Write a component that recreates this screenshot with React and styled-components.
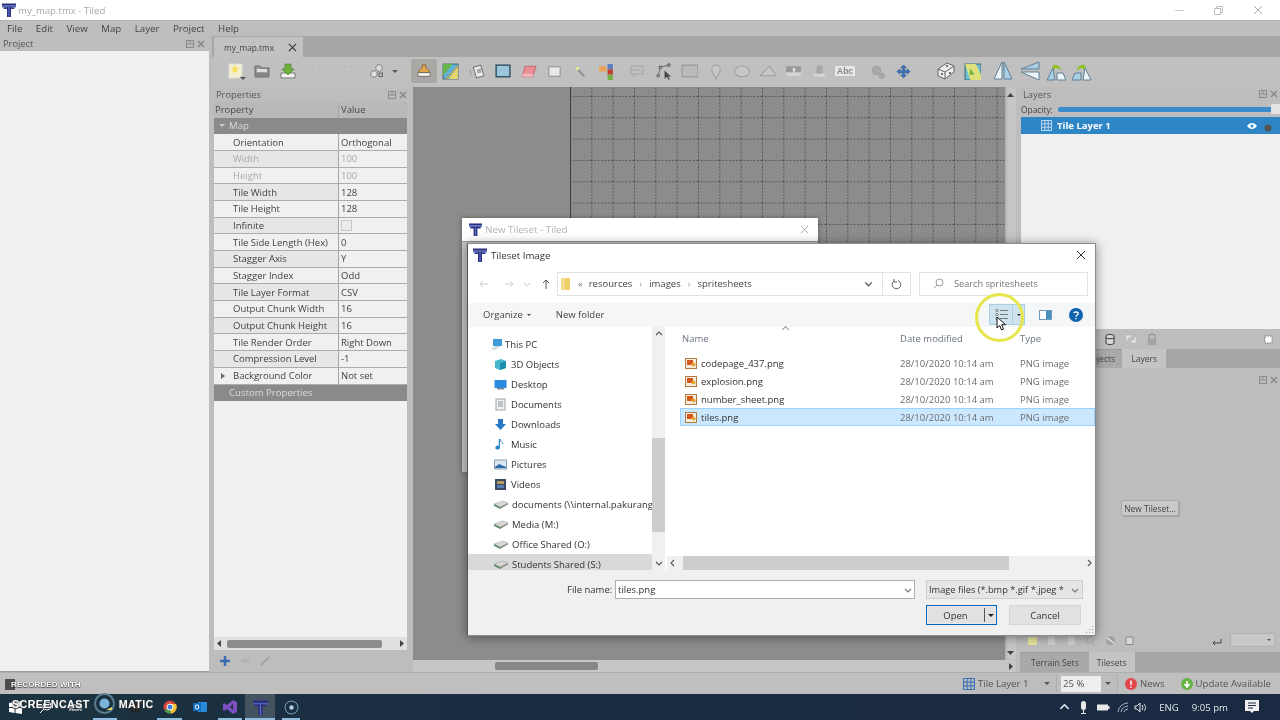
import React from 'react'
import styled, { createGlobalStyle } from 'styled-components'

const Global = createGlobalStyle`
  html, body { margin: 0; padding: 0; background: #bdbdbd; overflow: hidden; }
  * { box-sizing: border-box; }
`

const Page = styled.div`
  position: relative;
  width: 1280px;
  height: 720px;
  display: flex;
  flex-direction: column;
  overflow: hidden;
  background: #bdbdbd;
  font-family: "Open Sans", "Liberation Sans", sans-serif;
  font-size: 9.5px;
  color: #3a3a3a;
  filter: blur(0.3px);
`

/* main window chrome */
const TitleBar = styled.div`
  height: 20px;
  background: #fff;
  display: flex;
  align-items: center;
  padding: 0 0 0 2px;
  color: #a8a8a8;
  font-size: 9.6px;
`
const TitleText = styled.span`
  margin-left: 2px;
  flex: 1;
`
const WinButtons = styled.div`
  display: flex;
  align-items: center;
  gap: 30px;
  padding-right: 17px;
`
const MenuBar = styled.div`
  height: 16px;
  background: #bebebe;
  border-top: 1px solid #b0b0b0;
  display: flex;
  align-items: center;
  padding: 0 0 1px 7px;
  gap: 13.5px;
  font-size: 9.7px;
  color: #444;
`
const Workspace = styled.div`
  height: 636px;
  display: flex;
  background: #bdbdbd;
`
const ProjectDock = styled.div`
  width: 209px;
  display: flex;
  flex-direction: column;
  margin-right: 3px;
`
const DockHeader = styled.div`
  height: ${p => p.$h || 15}px;
  display: flex;
  align-items: center;
  justify-content: space-between;
  padding: 0 ${p => p.$pr || 2}px 0 ${p => p.$pl || 2}px;
  font-size: 9.3px;
  color: #555;
  flex: none;
`
const DockButtons = styled.div`
  display: flex;
  gap: 3px;
  align-items: center;
`
const WhitePanel = styled.div`
  flex: 1;
  background: #f0f0f0;
  border-bottom: 1px solid #9c9c9c;
`
const EditorColumn = styled.div`
  flex: 1;
  display: flex;
  flex-direction: column;
  min-width: 0;
`
const TabStrip = styled.div`
  height: 21px;
  background: #a6a6a6;
  display: flex;
  align-items: flex-end;
  padding-left: 2px;
  flex: none;
`
const MapTab = styled.div`
  width: 89px;
  height: 20px;
  background: #c2c2c2;
  display: flex;
  align-items: center;
  justify-content: space-between;
  padding: 0 6px 0 10px;
  font-size: 8.3px;
  color: #444;
`
const Toolbar = styled.div`
  height: 30px;
  background: #c0c0c0;
  display: flex;
  align-items: center;
  padding: 0 0 2px 12px;
  flex: none;
`
const Tool = styled.div`
  width: ${p => p.$w || 26}px;
  margin-left: ${p => p.$gap || 0}px;
  height: 24px;
  flex: none;
  display: flex;
  align-items: center;
  justify-content: center;
  background: ${p => (p.$active ? '#aaa8a4' : 'transparent')};
  border-radius: 2px;
`
const EditorBody = styled.div`
  flex: 1;
  display: flex;
  min-height: 0;
`

/* properties */
const PropertiesDock = styled.div`
  width: 196px;
  margin-right: 5px;
  display: flex;
  flex-direction: column;
  flex: none;
`
const PropHead = styled.div`
  height: 15.5px;
  margin-left: 2px;
  margin-right: 1px;
  display: grid;
  grid-template-columns: 124px 1fr;
  background: #b9b9b9;
  align-items: center;
  font-size: 9.5px;
  color: #4a4a4a;
`
const PropCell = styled.span`
  padding-left: ${p => p.$pl || 1}px;
  border-left: ${p => (p.$sep ? '1px solid #a5a5a5' : 'none')};
  height: 100%;
  display: flex;
  align-items: center;
`
const PropTable = styled.div`
  margin-left: 2px;
  margin-right: 1px;
  flex: 1;
  background: #f1f1f1;
  display: flex;
  flex-direction: column;
`
const GroupRow = styled.div`
  height: 16.7px;
  background: #8a8a8a;
  color: #dcdcdc;
  display: flex;
  align-items: center;
  padding-left: ${p => p.$pl || 5}px;
  gap: 4px;
  font-size: 9.6px;
  flex: none;
`
const PropRow = styled.div`
  height: 16.7px;
  flex: none;
  display: grid;
  grid-template-columns: 124px 1fr;
  border-bottom: 1px solid #ababab;
  background: ${p => (p.$alt ? '#e6e6e6' : '#f0f0f0')};
  color: ${p => (p.$off ? '#aaa' : '#3f3f3f')};
  font-size: 9.5px;
  position: relative;
`
const PropName = styled.span`
  padding-left: 19px;
  display: flex;
  align-items: center;
  white-space: nowrap;
`
const PropValue = styled.span`
  padding-left: 2px;
  border-left: 1px solid #a5a5a5;
  display: flex;
  align-items: center;
  background: #f0f0f0;
`
const RowCaret = styled.i`
  position: absolute;
  left: 7px;
  top: 5px;
  border-left: 4px solid #666;
  border-top: 3px solid transparent;
  border-bottom: 3px solid transparent;
`
const CheckBox = styled.i`
  width: 11px;
  height: 11px;
  border: 1px solid #c6c6c6;
  background: #ececec;
`
const HScroll = styled.div`
  height: ${p => p.$h || 12}px;
  flex: none;
  display: flex;
  align-items: center;
  justify-content: space-between;
  background: ${p => p.$bg || '#d2d2d2'};
  padding: 0 2px;
  position: relative;
`
const Thumb = styled.i`
  height: ${p => p.$h || 8}px;
  width: ${p => p.$w}px;
  margin-left: ${p => p.$ml || 0}px;
  margin-right: auto;
  background: ${p => p.$c || '#8c8c8c'};
  border-radius: ${p => (p.$h ? 0 : 2)}px;
`
const PropsFoot = styled.div`
  height: 22px;
  display: flex;
  align-items: center;
  padding-left: 8px;
  gap: 10px;
  flex: none;
`

/* map area */
const MapColumn = styled.div`
  width: 603px;
  margin-right: 4px;
  display: flex;
  flex-direction: column;
  flex: none;
`
const MapRow = styled.div`
  flex: 1;
  display: flex;
  min-height: 0;
`
const MapView = styled.div`
  width: 592px;
  background: #8c8c8c;
  padding-left: 157px;
`
const VScroll = styled.div`
  flex: 1;
  background: #c6c6c6;
  display: flex;
  flex-direction: column;
  justify-content: space-between;
  align-items: center;
  padding: 4px 0;
  box-shadow: inset 2px 0 3px -1px rgba(0, 0, 0, 0.15);
`

/* right docks */
const RightDock = styled.div`
  flex: 1;
  display: flex;
  flex-direction: column;
  min-width: 0;
`
const OpacityRow = styled.div`
  height: 16px;
  display: flex;
  align-items: center;
  gap: 5px;
  padding-left: 1px;
  font-size: 8.4px;
  flex: none;
  color: #444;
`
const Slider = styled.div`
  flex: 1;
  height: 5px;
  margin-right: 1px;
  background: #3a8dcb;
  border-radius: 2px;
  position: relative;
`
const SliderKnob = styled.i`
  position: absolute;
  right: -1px;
  top: -3px;
  width: 9px;
  height: 10px;
  background: #e4e4e4;
  border-radius: 1px;
`
const LayerPanel = styled.div`
  height: 212px;
  flex: none;
  background: #f0f0f0;
  margin-left: 1px;
`
const LayerRow = styled.div`
  height: 17px;
  background: #2f86c6;
  display: flex;
  align-items: center;
  padding: 0 5px 0 20px;
  gap: 5px;
  font-size: 9.5px;
  font-weight: 700;
  color: #fff;
`
const LayerName = styled.span`
  flex: 1;
`
const MiniTools = styled.div`
  height: 20px;
  display: flex;
  align-items: center;
  gap: 9px;
  padding: 0 6px 0 84px;
  flex: none;
`
const DockTabs = styled.div`
  height: ${p => p.$h || 19}px;
  background: #a6a6a6;
  display: flex;
  align-items: stretch;
  padding-left: ${p => p.$pl || 0}px;
  font-size: 8.6px;
  flex: none;
`
const DockTab = styled.div`
  padding: 0 ${p => p.$px || 7}px;
  display: flex;
  align-items: center;
  background: ${p => (p.$on ? '#c4c4c4' : '#a9a9a9')};
  border-top: 1px solid ${p => (p.$on ? '#c4c4c4' : '#9c9c9c')};
  color: #474747;
`
const TilesetBody = styled.div`
  flex: 1;
  display: flex;
  flex-direction: column;
`
const TilesetCenter = styled.div`
  flex: 1;
  display: flex;
  align-items: flex-end;
  padding: 0 0 116px 101px;
`
const PlainButton = styled.div`
  width: 58px;
  height: 16px;
  background: #c9c9c9;
  border: 1px solid #aaa;
  border-radius: 2px;
  box-shadow: 1px 1px 1px rgba(0, 0, 0, 0.15);
  font-size: 8.4px;
  display: flex;
  align-items: center;
  justify-content: center;
  white-space: nowrap;
  color: #444;
`
const TilesetTools = styled.div`
  height: 20px;
  display: flex;
  align-items: center;
  padding: 0 5px 4px 6px;
  gap: 6.4px;
  flex: none;
`
const ToolSpacer = styled.span`
  flex: 1;
`
const MiniCombo = styled.div`
  width: 45px;
  height: 14px;
  background: #c8c8c8;
  border: 1px solid #b0b0b0;
  display: flex;
  align-items: center;
  justify-content: flex-end;
  padding-right: 3px;
`
const Caret = styled.i`
  display: inline-block;
  border-top: ${p => p.$s || 3}px solid ${p => p.$c || '#555'};
  border-left: ${p => p.$s || 3}px solid transparent;
  border-right: ${p => p.$s || 3}px solid transparent;
`

/* status + taskbar */
const StatusBar = styled.div`
  height: 22px;
  background: #bfbfbf;
  border-top: 1px solid #adadad;
  display: flex;
  align-items: center;
  justify-content: flex-end;
  font-size: 9.6px;
  color: #555;
  padding-right: 9px;
`
const StatusCombo = styled.div`
  width: ${p => p.$w}px;
  height: 19px;
  display: flex;
  align-items: center;
  justify-content: space-between;
  padding: 0 6px 0 ${p => p.$pl || 3}px;
  margin-right: 3px;
  background: ${p => p.$bg || '#bdbdbd'};
  border-right: 1px solid #aeaeae;
`
const StatusLabel = styled.span`
  display: flex;
  align-items: center;
  gap: 3px;
  margin-left: ${p => p.$ml || 0}px;
`
const ZoomValue = styled.span`
  background: #eee;
  height: 16px;
  width: 40px;
  display: flex;
  align-items: center;
  padding-left: 2px;
`
const Taskbar = styled.div`
  height: 26px;
  background: linear-gradient(90deg, #1b3340, #1a2c42 40%, #1a2a42);
  display: flex;
  align-items: center;
  color: #e4e8ee;
  font-size: 9.6px;
  position: relative;
`
const TaskSlot = styled.div`
  width: ${p => p.$w || 30}px;
  height: 26px;
  margin-left: ${p => p.$gap || 0}px;
  display: flex;
  align-items: center;
  justify-content: center;
  background: ${p => (p.$active ? '#44535f' : 'transparent')};
  position: relative;
  flex: none;
  &::after {
    content: '';
    display: ${p => (p.$open ? 'block' : 'none')};
    position: absolute;
    left: ${p => (p.$active ? 0 : 3)}px;
    right: ${p => (p.$active ? 0 : 3)}px;
    bottom: 0;
    height: 2px;
    background: #8fbde0;
  }
`
const Tray = styled.div`
  margin-left: auto;
  display: flex;
  align-items: center;
  gap: 7px;
  padding-right: 21px;
`
const TrayItem = styled.span`
  margin-left: ${p => p.$ml || 0}px;
`

/* watermark */
const Watermark = styled.div`
  position: absolute;
  left: 11px;
  top: 679px;
  color: #fff;
  font-family: "Liberation Sans", sans-serif;
  font-weight: 700;
  text-shadow: 0 0 1px #333, 0 1px 1px #444;
`
const WmBadge = styled.i`
  position: absolute;
  left: -6px;
  top: 0;
  width: 10px;
  height: 11px;
  background: #4c4c4c;
`
const WmSmall = styled.div`
  font-size: 8px;
  letter-spacing: 0.1px;
  line-height: 12px;
  position: relative;
`
const WmLabel = styled.span`
  position: relative;
`
const WmBig = styled.div`
  display: flex;
  align-items: center;
  font-size: 10.7px;
  letter-spacing: 0.4px;
  line-height: 20px;
  margin: 2px 0 0 1px;
  gap: 4px;
`

/* dialogs */
const BackDialog = styled.div`
  position: absolute;
  left: 462px;
  top: 218px;
  width: 356px;
  height: 254px;
  background: #c6c6c6;
  box-shadow: 0 0 5px rgba(0, 0, 0, 0.35);
`
const BackTitle = styled.div`
  height: 24px;
  background: #fff;
  display: flex;
  align-items: center;
  justify-content: space-between;
  padding: 0 9px 0 7px;
  color: #b4b4b4;
  font-size: 9.8px;
  border-bottom: 1px solid #999;
`
const BackLabel = styled.span`
  display: flex;
  align-items: center;
  gap: 3px;
`
const Dialog = styled.div`
  position: absolute;
  left: 467px;
  top: 243px;
  width: 629px;
  height: 393px;
  background: #fff;
  border: 1px solid #8c8c8c;
  border-left: 1px solid #555;
  box-shadow: 0 1px 10px rgba(0, 0, 0, 0.45);
  display: flex;
  flex-direction: column;
  color: #333;
  font-size: 9.5px;
`
const DialogTitle = styled.div`
  height: 22px;
  display: flex;
  align-items: center;
  justify-content: space-between;
  padding: 0 9px 0 5px;
  font-size: 9.7px;
  flex: none;
`
const DialogLabel = styled.span`
  display: flex;
  align-items: center;
  gap: 4px;
`
const AddressRow = styled.div`
  height: 24px;
  margin-top: 6px;
  display: flex;
  align-items: center;
  padding-left: 10px;
  flex: none;
`
const NavArrow = styled.div`
  width: ${p => p.$w || 20}px;
  margin-left: ${p => p.$gap || 0}px;
  display: flex;
  justify-content: center;
`
const PathBox = styled.div`
  width: 326px;
  height: 24px;
  margin-left: 5px;
  border: 1px solid #e2e2e2;
  display: flex;
  align-items: center;
  padding: 0 0 1px 3px;
  color: #444;
`
const PathText = styled.span`
  margin-left: ${p => p.$ml || 6}px;
  color: ${p => p.$c || '#444'};
`
const PathEnd = styled.div`
  margin-left: auto;
  width: 28px;
  height: 22px;
  display: flex;
  align-items: center;
  justify-content: center;
`
const RefreshBox = styled.div`
  width: 28px;
  height: 24px;
  border: 1px solid #e2e2e2;
  border-left: 0;
  display: flex;
  align-items: center;
  justify-content: center;
`
const SearchBox = styled.div`
  width: 169px;
  height: 24px;
  margin-left: 8px;
  border: 1px solid #e2e2e2;
  display: flex;
  align-items: center;
  gap: 10px;
  padding: 0 0 1px 13px;
  color: #777;
  font-size: 9.2px;
`
const CommandBar = styled.div`
  height: 24px;
  margin-top: 7px;
  background: #f5f6f7;
  display: flex;
  align-items: center;
  padding: 0 12px 1px 15px;
  flex: none;
  color: #444;
`
const CommandItem = styled.span`
  display: flex;
  align-items: center;
  gap: 4px;
  margin-left: ${p => p.$ml || 0}px;
`
const ViewButton = styled.div`
  margin-left: auto;
  width: 36px;
  height: 21px;
  background: #cfe3ee;
  border: 1px solid #a9cfe3;
  display: flex;
  align-items: center;
`
const ViewMain = styled.div`
  width: 23px;
  height: 100%;
  display: flex;
  align-items: center;
  justify-content: center;
  border-right: 1px solid #a9cfe3;
`
const ViewDrop = styled.div`
  flex: 1;
  display: flex;
  justify-content: center;
`
const CommandIcon = styled.div`
  margin-left: ${p => p.$ml}px;
  display: flex;
`
const DialogBody = styled.div`
  height: 243px;
  display: flex;
  flex: none;
`
const NavPane = styled.div`
  width: 184px;
  padding-top: 7px;
  overflow: hidden;
  flex: none;
`
const NavRow = styled.div`
  height: 20px;
  display: flex;
  align-items: center;
  white-space: nowrap;
  gap: ${p => p.$g || 4}px;
  padding-left: ${p => p.$pl || 26}px;
  background: ${p => (p.$sel ? '#d9d9d9' : 'transparent')};
`
const NavScroll = styled.div`
  width: 13px;
  background: #f0f0f0;
  display: flex;
  flex-direction: column;
  align-items: center;
  justify-content: space-between;
  padding: 3px 0;
  position: relative;
  flex: none;
`
const NavThumb = styled.i`
  position: absolute;
  left: 0;
  right: 0;
  top: 111px;
  height: 94px;
  background: #cdcdcd;
`
const FileList = styled.div`
  flex: 1;
  margin-left: 2px;
  display: flex;
  flex-direction: column;
  min-width: 0;
`
const FileHead = styled.div`
  height: 22px;
  display: grid;
  grid-template-columns: 218px 120px 1fr;
  padding-left: 15px;
  align-items: center;
  color: #6a7280;
  margin-bottom: 5px;
  position: relative;
  flex: none;
`
const SortMark = styled.i`
  position: absolute;
  left: 116px;
  top: 0;
  width: 5px;
  height: 5px;
  border-left: 1px solid #999;
  border-top: 1px solid #999;
  transform: rotate(45deg);
`
const FileRow = styled.div`
  height: 18px;
  margin-left: 13px;
  padding-left: 5px;
  flex: none;
  display: grid;
  grid-template-columns: 215px 120px 1fr;
  align-items: center;
  background: ${p => (p.$sel ? '#cce8ff' : 'transparent')};
  box-shadow: ${p => (p.$sel ? 'inset 0 0 0 1px #99d1ff' : 'none')};
`
const FileName = styled.span`
  display: flex;
  align-items: center;
  gap: 4px;
  color: #333;
`
const FileMeta = styled.span`
  color: #6d6d6d;
`
const ListSpacer = styled.div`
  flex: 1;
`
const Footer = styled.div`
  flex: 1;
  background: #f0f0f0;
  padding-top: 10px;
  position: relative;
`
const FooterRow = styled.div`
  display: flex;
  align-items: center;
  height: 19px;
  padding-left: 99px;
`
const FileLabel = styled.span`
  width: 48px;
`
const FileInput = styled.div`
  width: 300px;
  height: 19px;
  background: #fff;
  border: 1px solid #adadad;
  display: flex;
  align-items: center;
  justify-content: space-between;
  padding: 0 2px 0 2px;
`
const FileType = styled.div`
  width: 157px;
  height: 19px;
  margin-left: 11px;
  background: #e5e5e5;
  border: 1px solid #cfcfcf;
  display: flex;
  align-items: center;
  justify-content: space-between;
  padding: 0 3px 0 2px;
  white-space: nowrap;
  overflow: hidden;
  font-size: 9.25px;
`
const ButtonRow = styled.div`
  display: flex;
  justify-content: flex-end;
  gap: 12px;
  margin-top: 6px;
  padding-right: 14px;
`
const OpenButton = styled.div`
  width: 71px;
  height: 20px;
  background: #e1e1e1;
  border: 1px solid #0067c0;
  box-shadow: inset 0 0 0 1px #eaeaea;
  display: flex;
  align-items: center;
`
const OpenLabel = styled.span`
  flex: 1;
  text-align: center;
`
const OpenDrop = styled.span`
  width: 12px;
  height: 14px;
  border-left: 1px solid #555;
  display: flex;
  align-items: center;
  justify-content: center;
`
const CancelButton = styled.div`
  width: 72px;
  height: 20px;
  background: #e1e1e1;
  border: 1px solid #d4d4d4;
  display: flex;
  align-items: center;
  justify-content: center;
`
const Grip = styled.div`
  position: absolute;
  right: 1px;
  bottom: 1px;
  display: flex;
`

/* overlay: recording highlight */
const Highlight = styled.div`
  position: absolute;
  left: 975px;
  top: 293px;
  width: 49px;
  height: 49px;
  border-radius: 50%;
  border: 3px solid #e6e64c;
  box-shadow: inset 0 0 1px rgba(230, 230, 80, 0.6);
`
const Pointer = styled.div`
  position: absolute;
  left: 996px;
  top: 316px;
  display: flex;
`

/* icons */
const Ico = ({ s = 16, w, h, v = '0 0 16 16', children, o }) => (
  <svg width={w || s} height={h || s} viewBox={v} opacity={o} style={{ display: 'block', flex: 'none' }}>{children}</svg>
)

const TiledLogo = ({ s = 14 }) => (
  <Ico s={s} v="0 0 14 14">
    <rect x="0" y="0.5" width="14" height="2.2" fill="#2a2b80" />
    <rect x="0" y="2.7" width="14" height="1.6" fill="#4b66b8" />
    <rect x="1.5" y="4.3" width="11" height="1.6" fill="#2a2b80" />
    <rect x="5" y="4" width="4" height="10" fill="#2a2b80" />
    <rect x="6.4" y="4" width="1.2" height="10" fill="#5572c4" />
  </Ico>
)
const DockIcons = ({ c = '#8a8a8a' }) => (
  <DockButtons>
    <Ico s={8} v="0 0 8 8"><rect x=".5" y=".5" width="7" height="7" fill="none" stroke={c} /><path d="M.5 4h7M4 .5v3" stroke={c} /></Ico>
    <Ico s={8} v="0 0 8 8"><path d="M1 1l6 6M7 1L1 7" stroke={c} strokeWidth="1.6" /></Ico>
  </DockButtons>
)
const IX = ({ s = 10, c = '#555', w = 1 }) => (
  <Ico s={s} v="0 0 10 10"><path d="M1 1l8 8M9 1L1 9" stroke={c} strokeWidth={w} /></Ico>
)

const tools = {
  new: <Ico s={20} v="0 0 20 20"><path d="M2 3h13v11l-3 3H2z" fill="#f4f0d0" stroke="#ddd" /><path d="M8 4l1.2 2.8 3 .2-2.3 2 .8 3L8 10.4 5.3 12l.8-3-2.3-2 3-.2z" fill="#f4df5a" /><path d="M13 16h6l-3 3z" fill="#555" /></Ico>,
  open: <Ico s={18} v="0 0 18 18"><path d="M2 4h5l1 2h8v9H2z" fill="#9b9b9b" stroke="#666" /><rect x="4" y="7" width="10" height="3" fill="#ddd" /><path d="M2 11h14v4H2z" fill="#858585" /></Ico>,
  save: <Ico s={18} v="0 0 18 18"><path d="M2 11h14v5H2z" fill="#f2f2f2" stroke="#777" /><path d="M6 2h6v5h3l-6 6-6-6h3z" fill="#6fb43a" stroke="#3f7a1e" strokeWidth=".6" /></Ico>,
  undo: <Ico s={16}><path d="M12 13c2-4 0-8-5-7L9 3 4 6l4 4-1-3c3-1 5 2 3 6z" fill="#cdcdcd" stroke="#b4b4b4" strokeWidth=".5" /></Ico>,
  redo: <Ico s={16}><path d="M4 13C2 9 4 5 9 6L7 3l5 3-4 4 1-3c-3-1-5 2-3 6z" fill="#cdcdcd" stroke="#b4b4b4" strokeWidth=".5" /></Ico>,
  gears: <Ico s={16}><circle cx="10" cy="5" r="3.2" fill="#ddd" stroke="#555" strokeDasharray="1.6 .8" /><circle cx="5" cy="11" r="3.2" fill="#ddd" stroke="#555" strokeDasharray="1.6 .8" /><rect x="10" y="10" width="3.5" height="3.5" fill="none" stroke="#666" /></Ico>,
  stamp: <Ico s={14} v="0 0 16 16"><path d="M6 1h4v3c0 2 4 2 4 5v1H2V9c0-3 4-3 4-5z" fill="#e2a94e" stroke="#7a5a1e" strokeWidth=".8" /><rect x="1" y="10" width="14" height="4" fill="#f6f6f0" stroke="#555" strokeWidth=".8" /></Ico>,
  terrain: <Ico s={17}><rect x="1" y="1" width="14" height="14" fill="#5fb0d8" stroke="#4a6a7a" /><path d="M1 1h9L1 12z" fill="#67b64c" /><path d="M15 4v11H6z" fill="#e8d66a" /><path d="M4 15L15 3" stroke="#d7a635" strokeWidth="1.2" /></Ico>,
  bucket: <Ico s={17}><path d="M5 4l7-2 3 10-7 2z" fill="#eee" stroke="#777" /><path d="M8 6l4-1 1 4-4 1z" fill="#aaa" /><path d="M2 6l1 6" stroke="#999" /></Ico>,
  rect: <Ico s={17}><rect x="2" y="2" width="13" height="11" fill="#9cc7da" stroke="#2c4e62" strokeWidth="1.3" /></Ico>,
  eraser: <Ico s={17}><path d="M5 3h10l-3 10H2z" fill="#ea8f96" stroke="#c96a72" /><path d="M2 13l.5-3h10l-.6 3z" fill="#f2b7bc" /></Ico>,
  select: <Ico s={15}><rect x="2" y="3" width="12" height="10" fill="#e9e9e9" stroke="#8a8a8a" /></Ico>,
  wand: <Ico s={14}><path d="M6 7l7 7" stroke="#888" strokeWidth="2" /><circle cx="5" cy="5" r="1.8" fill="#ecec90" /></Ico>,
  same: <Ico s={17}><rect x="1" y="3" width="7" height="5" fill="#e9a45a" /><rect x="9" y="1" width="5" height="5" fill="#587fbe" /><rect x="9" y="6" width="5" height="5" fill="#c23d30" /><rect x="9" y="11" width="5" height="5" fill="#77b148" /></Ico>,
  objSel: <Ico s={16}><rect x="2" y="3" width="12" height="8" fill="none" stroke="#a3a3a3" /><path d="M2 7h8M5 11v3" stroke="#a3a3a3" /></Ico>,
  edit: <Ico s={17}><path d="M3 12L5 4l8-2" fill="none" stroke="#777" /><circle cx="3" cy="12" r="1.2" fill="#ddd" stroke="#555" /><circle cx="5" cy="4" r="1.2" fill="#ddd" stroke="#555" /><circle cx="13" cy="2" r="1.2" fill="#ddd" stroke="#555" /><path d="M9 7v8l2-2 2 3 1-1-2-2h3z" fill="#444" /></Ico>,
  objRect: <Ico s={17}><rect x="1" y="2" width="15" height="11" fill="#bbb" stroke="#9b9b9b" strokeWidth="1.2" /></Ico>,
  point: <Ico s={17}><path d="M8.5 15C6 10 4.5 8 4.5 6a4 4 0 0 1 8 0c0 2-1.5 4-4 9z" fill="#c8c8c8" stroke="#a0a0a0" /></Ico>,
  ellipse: <Ico s={17}><ellipse cx="8.5" cy="8" rx="7" ry="5" fill="#c8c8c8" stroke="#a0a0a0" /></Ico>,
  poly: <Ico s={17}><path d="M1 12L10 3l6 9z" fill="#c8c8c8" stroke="#a0a0a0" /></Ico>,
  tile: <Ico s={17}><rect x="1" y="3" width="14" height="6" fill="#9a9a9a" /><rect x="1" y="9" width="14" height="3" fill="#d5d5d5" /><path d="M7 5l1.5 6L10 5z" fill="#e3e3e3" /></Ico>,
  template: <Ico s={17}><path d="M5 10V5a3 3 0 0 1 6 0v5z" fill="#a8a8a8" /><rect x="3" y="10" width="10" height="3" fill="#d5d5d5" /></Ico>,
  group: <Ico s={17}><circle cx="7" cy="7" r="4" fill="#a9a9a9" stroke="#999" strokeDasharray="1.8 .8" /><circle cx="12" cy="12" r="2.4" fill="#a9a9a9" stroke="#999" strokeDasharray="1.2 .6" /></Ico>,
  move: <Ico s={15}><path d="M8 1l3 3H9.2v3H12V5l3 3-3 3V9.200H9.200V12H11l-3 3-3-3h1.800V9.200H4V11L1 8l3-3v1.800h2.800V4H5z" fill="#3d74b8" stroke="#2a4f8a" strokeWidth=".5" /></Ico>,
  dice: <Ico s={20} v="0 0 20 20"><path d="M2 8l9-6 7 3v6l-9 7-7-3z" fill="#ececec" stroke="#666" /><path d="M2 8l7 3 9-6M9 11v7" stroke="#666" fill="none" /><circle cx="11" cy="5" r="1" fill="#444" /><circle cx="6" cy="13" r="1" fill="#444" /><circle cx="14" cy="12" r="1" fill="#444" /></Ico>,
  wang: <Ico s={17}><rect x="1" y="1" width="15" height="15" fill="#74c0d8" stroke="#3b6a7a" /><path d="M1 1h10l5 10v5H6z" fill="#dfe27a" /><path d="M6 5l4 6H5z" fill="#78b24a" /></Ico>,
  flipH: <Ico s={20} v="0 0 20 20"><path d="M9 1L1 18h8z" fill="#eef5fa" stroke="#5f7f95" /><path d="M11 1l8 17h-8z" fill="#a9d0e6" stroke="#5f7f95" /></Ico>,
  flipV: <Ico s={20} v="0 0 20 20"><path d="M19 1L1 8h18z" fill="#a9d0e6" stroke="#5f7f95" /><path d="M19 19L1 11h18z" fill="#eef5fa" stroke="#5f7f95" /></Ico>,
  rotL: <Ico s={20} v="0 0 20 20"><path d="M7 7L1 19h8z" fill="#a9d0e6" stroke="#5f7f95" /><path d="M11 12h6l3 7h-9z" fill="#eef5fa" stroke="#5f7f95" /><path d="M9 3l-3 3 3 3V7c3 0 5 1 6 3 0-4-3-6-6-6z" fill="#8ec21f" /></Ico>,
  rotR: <Ico s={20} v="0 0 20 20"><path d="M13 7l6 12h-8z" fill="#eef5fa" stroke="#5f7f95" /><path d="M9 12H3l-3 7h9z" fill="#a9d0e6" stroke="#5f7f95" /><path d="M11 3l3 3-3 3V7C8 7 6 8 5 10c0-4 3-6 6-6z" fill="#8ec21f" /></Ico>,
}

const toolbarItems = [
  ['new'], ['open', 24], ['save', 26, 1], ['undo', 26, 5], ['redo', 26, 1], ['gears', 26, 5],
  ['caret', 10], ['stamp', 26, 11, true], ['terrain'], ['bucket'], ['rect'], ['eraser'], ['select'], ['wand'], ['same'],
  ['objSel', 26, 5], ['edit'], ['objRect'], ['point'], ['ellipse'], ['poly'], ['tile'], ['template'], ['abc'],
  ['group', 26, 6], ['move'], ['dice', 26, 17], ['wang'], ['flipH', 26, 5], ['flipV', 26, 1], ['rotL'], ['rotR'],
]

const AbcIcon = styled.span`
  background: #e6e6e6;
  color: #888;
  font-size: 8.4px;
  font-weight: 700;
  padding: 0 2px;
  line-height: 10px;
  font-family: "Liberation Sans", sans-serif;
`

const propRows = [
  ['Orientation', 'Orthogonal'],
  ['Width', '100', true],
  ['Height', '100', true],
  ['Tile Width', '128'],
  ['Tile Height', '128'],
  ['Infinite', 'check'],
  ['Tile Side Length (Hex)', '0'],
  ['Stagger Axis', 'Y'],
  ['Stagger Index', 'Odd'],
  ['Tile Layer Format', 'CSV'],
  ['Output Chunk Width', '16'],
  ['Output Chunk Height', '16'],
  ['Tile Render Order', 'Right Down'],
  ['Compression Level', '-1'],
  ['Background Color', 'Not set'],
]

const MapGrid = () => (
  <svg width="435" height="470" style={{ display: 'block' }}>
    <defs>
      <pattern id="cell" x="0" y="9" width="21.333" height="21.333" patternUnits="userSpaceOnUse">
        <path d="M0 0.5H21.333" stroke="#333" strokeDasharray="1.3 2" strokeWidth="1" fill="none" />
        <path d="M0.5 0V21.333" stroke="#333" strokeDasharray="1.3 2" strokeWidth="1" fill="none" />
      </pattern>
    </defs>
    <rect width="435" height="470" fill="url(#cell)" opacity="0.8" />
    <path d="M.5 0V470" stroke="#3c3c3c" />
  </svg>
)

const FileIcon = () => (
  <Ico w={12} h={11} v="0 0 12 11">
    <rect x=".5" y=".5" width="11" height="10" fill="#f4ede0" stroke="#b07a40" />
    <rect x="2" y="2" width="6" height="5" fill="#d4571e" />
    <circle cx="8.500" cy="6.500" r="2" fill="#e8a22e" />
  </Ico>
)
const DriveIcon = () => (
  <Ico w={14} h={10} v="0 0 14 10">
    <path d="M0 5l9-3 5 2-8 4z" fill="#d8d8d8" stroke="#9a9a9a" strokeWidth=".5" />
    <path d="M0 5l6 3v2L0 7z" fill="#5e8f6a" />
    <path d="M6 8l8-4v1.500L6 10z" fill="#8a8f8a" />
  </Ico>
)
const navItems = [
  ['3D Objects', <Ico s={13} key="a" v="0 0 13 13"><path d="M1 3l6-2 5 2v7l-6 2-5-2z" fill="#44b8cc" /><path d="M6 5l6-2v7l-6 2z" fill="#1c8fb0" /></Ico>],
  ['Desktop', <Ico s={13} key="b" v="0 0 13 13"><rect x="0.500" y="2" width="12" height="8" fill="#2a8ae0" /><rect x="3" y="10" width="7" height="1.500" fill="#888" /></Ico>],
  ['Documents', <Ico s={13} key="c" v="0 0 13 13"><rect x="2" y="1" width="9" height="11" fill="#eef0f2" stroke="#9aa4ad" /><path d="M4 4h5M4 6h5M4 8h5" stroke="#8a96a2" /></Ico>],
  ['Downloads', <Ico s={13} key="d" v="0 0 13 13"><path d="M4 1h5v5h3l-5.500 6L1 6h3z" fill="#2a78c8" /></Ico>],
  ['Music', <Ico s={13} key="e" v="0 0 13 13"><path d="M6 1v8.500a2.300 2 0 1 1-1.200-1.700V1z" fill="#2a86c8" /><path d="M6 1c0 3 3 3 3 5" stroke="#2a86c8" fill="none" /></Ico>],
  ['Pictures', <Ico s={13} key="f" v="0 0 13 13"><rect x="0.500" y="2" width="12" height="9" fill="#dbe7f0" stroke="#8aa0b2" /><path d="M1 9l4-3 7 3v1H1z" fill="#2e6ca8" /></Ico>],
  ['Videos', <Ico s={13} key="g" v="0 0 13 13"><rect x="1" y="1" width="11" height="11" fill="#3a4a68" /><rect x="3" y="3" width="7" height="3" fill="#b89a5a" /><rect x="3" y="7" width="7" height="3" fill="#5a7ab0" /></Ico>],
  ['documents (\\\\internal.pakurang', <DriveIcon key="h" />],
  ['Media (M:)', <DriveIcon key="i" />],
  ['Office Shared (O:)', <DriveIcon key="j" />],
  ['Students Shared (S:)', <DriveIcon key="k" />],
]
const files = ['codepage_437.png', 'explosion.png', 'number_sheet.png', 'tiles.png']

const Chev = ({ d = 'down', c = '#777', s = 8 }) => {
  const paths = { down: 'M1 3l3 3 3-3', up: 'M1 5l3-3 3 3', left: 'M5 1L2 4l3 3', right: 'M3 1l3 3-3 3' }
  return <Ico s={s} v="0 0 8 8"><path d={paths[d]} fill="none" stroke={c} strokeWidth="1.100" /></Ico>
}
const Tri = ({ d = 'up', c = '#444' }) => {
  const paths = { up: 'M0 6l3.500-4L7 6z', down: 'M0 2l3.500 4L7 2z', left: 'M5 0L1 3.500 5 7z', right: 'M2 0l4 3.500L2 7z' }
  return <Ico s={7} v="0 0 7 7"><path d={paths[d]} fill={c} /></Ico>
}
const GridIcon = ({ c = '#bcd8f0', s = 11 }) => (
  <Ico s={s} v="0 0 11 11">
    <path d="M.5 .5h10v10H.5zM.5 3.800h10M.5 7.200h10M3.800 .5v10M7.200 .5v10" fill="none" stroke={c} />
  </Ico>
)

export default function App() {
  return (
    <Page>
      <Global />
      <TitleBar>
        <TiledLogo />
        <TitleText>my_map.tmx - Tiled</TitleText>
        <WinButtons>
          <Ico s={9} v="0 0 9 9"><path d="M0 4.500h9" stroke="#ccc" /></Ico>
          <Ico s={9} v="0 0 9 9"><path d="M.5 2.500h6v6h-6zM2.500 2.500v-2h6v6h-2" fill="none" stroke="#bbb" /></Ico>
          <IX c="#aaa" />
        </WinButtons>
      </TitleBar>
      <MenuBar>
        {['File', 'Edit', 'View', 'Map', 'Layer', 'Project', 'Help'].map(m => <span key={m}>{m}</span>)}
      </MenuBar>
      <Workspace>
        <ProjectDock>
          <DockHeader $pl={3} $pr={4}>Project<DockIcons /></DockHeader>
          <WhitePanel />
        </ProjectDock>
        <EditorColumn>
          <TabStrip>
            <MapTab>my_map.tmx<IX s={9} c="#333" w={1.2} /></MapTab>
          </TabStrip>
          <Toolbar>
            {toolbarItems.map(([name, w, gap, active], i) => (
              <Tool key={i} $w={w} $gap={gap} $active={active}>
                {name === 'caret' ? <Caret $s={3} /> : name === 'abc' ? <AbcIcon>Abc</AbcIcon> : tools[name]}
              </Tool>
            ))}
          </Toolbar>
          <EditorBody>
            <PropertiesDock>
              <DockHeader $pl={4} $pr={1}>Properties<DockIcons /></DockHeader>
              <PropHead><PropCell>Property</PropCell><PropCell $sep $pl={2}>Value</PropCell></PropHead>
              <PropTable>
                <GroupRow><Caret $s={3} $c="#ccc" />Map</GroupRow>
                {propRows.map(([name, value, off], i) => (
                  <PropRow key={name} $alt={i % 2 === 1} $off={off}>
                    {name === 'Background Color' && <RowCaret />}
                    <PropName>{name}</PropName>
                    <PropValue>{value === 'check' ? <CheckBox /> : value}</PropValue>
                  </PropRow>
                ))}
                <GroupRow $pl={15}>Custom Properties</GroupRow>
                <ListSpacer />
                <HScroll $bg="#e0e0e0" $h={13}>
                  <Tri d="left" />
                  <Thumb $w={155} $ml={4} />
                  <Tri d="right" />
                </HScroll>
              </PropTable>
              <PropsFoot>
                <Ico s={10} v="0 0 10 10"><path d="M5 0v10M0 5h10" stroke="#3a6cb0" strokeWidth="2.500" /></Ico>
                <Ico s={10} v="0 0 10 10"><path d="M1 4h8M1 6h8" stroke="#a8a8a8" /></Ico>
                <Ico s={10} v="0 0 10 10"><path d="M1 9l8-8" stroke="#9a9a9a" strokeWidth="1.500" /></Ico>
              </PropsFoot>
            </PropertiesDock>
            <MapColumn>
              <MapRow>
                <MapView><MapGrid /></MapView>
                <VScroll><Tri d="up" /><Tri d="down" /></VScroll>
              </MapRow>
              <HScroll $bg="#c6c6c6" $h={12}>
                <Thumb $w={103} $ml={80} $c="#878787" />
                <Tri d="right" />
              </HScroll>
            </MapColumn>
            <RightDock>
              <DockHeader $h={14} $pl={3} $pr={2}>Layers<DockIcons /></DockHeader>
              <OpacityRow>Opacity:<Slider><SliderKnob /></Slider></OpacityRow>
              <LayerPanel>
                <LayerRow>
                  <GridIcon />
                  <LayerName>Tile Layer 1</LayerName>
                  <Ico s={12} v="0 0 12 12"><path d="M1 6c3-4 7-4 10 0-3 4-7 4-10 0z" fill="#fff" /><circle cx="6" cy="6" r="1.500" fill="#2f86c6" /></Ico>
                  <Ico s={12} v="0 0 12 12"><circle cx="5" cy="8" r="3.500" fill="#555" /><path d="M7 5l4-4" stroke="#3b76a8" /></Ico>
                </LayerRow>
              </LayerPanel>
              <MiniTools>
                <Ico s={12} v="0 0 12 12"><path d="M2 3c0-2 8-2 8 0v7c0 2-8 2-8 0z" fill="#d8d8d8" stroke="#333" /><path d="M2 5c2 1 6 1 8 0" stroke="#333" fill="none" /></Ico>
                <Ico w={12} h={12} v="0 0 12 12"><path d="M1 2h5v3H3v3H1zM11 10H6V7h3V4h2z" fill="#e4e4e4" stroke="#b0b0b0" strokeWidth=".5" /></Ico>
                <Ico w={12} h={12} v="0 0 12 12"><path d="M3 6V4a3 3 0 0 1 6 0v2" fill="none" stroke="#999" strokeWidth="1.400" /><rect x="2" y="6" width="8" height="6" fill="#a3a3a3" /></Ico>
                <ToolSpacer />
                <Ico s={11} v="0 0 11 11"><rect x="2" y="2" width="7" height="7" fill="#fff" stroke="#777" strokeDasharray="1.500 1" /></Ico>
              </MiniTools>
              <DockTabs $pl={58}><DockTab>Objects</DockTab><DockTab $on $px={9}>Layers</DockTab></DockTabs>
              <TilesetBody>
                <DockHeader $h={24} $pr={2}><span /><DockIcons c="#8c8c8c" /></DockHeader>
                <TilesetCenter><PlainButton>New Tileset...</PlainButton></TilesetCenter>
                <TilesetTools>
                  <Ico s={13} v="0 0 13 13"><rect x="2" y="3" width="9" height="8" fill="#e6e6a0" /></Ico>
                  <Ico s={13} v="0 0 13 13"><rect x="3" y="2" width="7" height="9" fill="#cfcfcf" /></Ico>
                  <Ico s={13} v="0 0 13 13"><rect x="3" y="2" width="7" height="9" fill="#cfcfcf" /></Ico>
                  <Ico s={13} v="0 0 13 13"><circle cx="6" cy="6" r="3.500" fill="none" stroke="#aaa" /><path d="M8 9l3 3" stroke="#aaa" /></Ico>
                  <Ico s={13} v="0 0 13 13"><circle cx="6.500" cy="6.500" r="4.500" fill="#a2a2a2" /><path d="M3 4l7 5" stroke="#e8e8e8" strokeWidth="1.500" /></Ico>
                  <Ico s={13} v="0 0 13 13"><path d="M3 3h7v7.500H3z" fill="#d8d8d8" stroke="#888" /></Ico>
                  <ToolSpacer />
                  <Ico s={13} v="0 0 13 13"><path d="M2 9h8V5M2 9l2-2M2 9l2 2" stroke="#444" fill="none" /></Ico>
                  <MiniCombo><Caret $s={2} /></MiniCombo>
                </TilesetTools>
                <DockTabs $h={20} $pl={1}>
                  <DockTab $px={10}>Terrain Sets</DockTab>
                  <DockTab $on $px={8}>Tilesets</DockTab>
                </DockTabs>
              </TilesetBody>
            </RightDock>
          </EditorBody>
        </EditorColumn>
      </Workspace>
      <StatusBar>
        <StatusCombo $w={97}>
          <StatusLabel>
            <GridIcon c="#3f74b8" s={12} />Tile Layer 1
          </StatusLabel>
          <Caret />
        </StatusCombo>
        <StatusCombo $w={58} $pl={1}><ZoomValue>25 %</ZoomValue><Caret /></StatusCombo>
        <StatusLabel $ml={4}>
          <Ico s={12} v="0 0 12 12"><circle cx="6" cy="6" r="6" fill="#e0474c" /><path d="M6 2.500v4.500M6 8.500v1.200" stroke="#fff" strokeWidth="1.500" /></Ico>News
        </StatusLabel>
        <StatusLabel $ml={16}>
          <Ico s={12} v="0 0 12 12"><circle cx="6" cy="6" r="6" fill="#66b346" /><path d="M6 9V3M3.500 6L6 9l2.500-3" stroke="#fff" strokeWidth="1.600" fill="none" /></Ico>Update Available
        </StatusLabel>
      </StatusBar>
      <Taskbar>
        <TaskSlot $w={30}><Ico s={13} v="0 0 13 13"><path d="M0 2l5.500-1v5H0zM6.500 1L13 0v6H6.500zM0 7h5.500v5L0 11zM6.500 7H13v6l-6.500-1z" fill="#fff" /></Ico></TaskSlot>
        <TaskSlot $w={30}><Ico s={13} v="0 0 13 13"><circle cx="8" cy="5" r="4" fill="none" stroke="#fff" /><path d="M5 8l-4 4" stroke="#fff" /></Ico></TaskSlot>
        <TaskSlot $w={30}><Ico s={13} v="0 0 13 13"><path d="M1 3v7M3 4h7v5H3zM12 3v7" stroke="#fff" fill="none" /></Ico></TaskSlot>
        <TaskSlot $w={30} $open />
        <TaskSlot $w={30}><Ico s={13} v="0 0 13 13"><circle cx="6.500" cy="6.500" r="5.500" fill="#222" /><path d="M4 4l5 5M9 4l-5 5" stroke="#555" /></Ico></TaskSlot>
        <TaskSlot $w={31} $gap={4} $open>
          <Ico s={14} v="0 0 14 14"><circle cx="7" cy="7" r="6.500" fill="#d8473a" /><path d="M7 7L1.500 10.500A6.500 6.500 0 0 0 8 13.500z" fill="#46a04f" /><path d="M7 4h6A6.500 6.500 0 0 1 8 13.500z" fill="#f2c230" /><circle cx="7" cy="7" r="3" fill="#3f7fe0" stroke="#fff" /></Ico>
        </TaskSlot>
        <TaskSlot $w={30}>
          <Ico s={14} v="0 0 14 14"><rect x="5" y="2" width="9" height="10" fill="#2a8ad8" /><rect x="0" y="3" width="8" height="8" fill="#0f6cbd" /><ellipse cx="4" cy="7" rx="1.800" ry="2.200" fill="none" stroke="#fff" /></Ico>
        </TaskSlot>
        <TaskSlot $w={30} $open>
          <Ico s={14} v="0 0 14 14"><path d="M10 0l4 2v10l-4 2-6-5-3 2-1-1V4l1-1 3 2zM10 4L7 7l3 3z" fill="#7b4fc0" /></Ico>
        </TaskSlot>
        <TaskSlot $w={30} $active $open><TiledLogo s={15} /></TaskSlot>
        <TaskSlot $w={24} $gap={4} $open>
          <Ico s={15} v="0 0 15 15"><circle cx="7.500" cy="7.500" r="6.500" fill="none" stroke="#7ea6b8" /><circle cx="7.500" cy="7.500" r="2.200" fill="#b4d0de" /></Ico>
        </TaskSlot>
        <Tray>
          <Chev d="up" c="#e4e8ee" s={11} />
          <Ico s={13} v="0 0 13 13"><rect x="4" y="0" width="5" height="9" rx="2.500" fill="#e8e8e8" /><path d="M6.500 9v3M4 12.500h5" stroke="#e8e8e8" /></Ico>
          <Ico s={13} v="0 0 13 13"><rect x="0" y="3.500" width="11" height="6" fill="#e8e8e8" /><rect x="11" y="5" width="1.500" height="3" fill="#e8e8e8" /></Ico>
          <Ico s={13} v="0 0 13 13"><path d="M1 11a10 10 0 0 1 10-9M4 11a7 7 0 0 1 7-6M7 11a4 4 0 0 1 4-3" fill="none" stroke="#aab4c0" /></Ico>
          <TrayItem $ml={-3}>
            <Ico s={13} v="0 0 13 13"><path d="M1 5h2l3-3v9L3 8H1zM8 4c1 1 1 4 0 5M10 3c2 2 2 5 0 7" fill="none" stroke="#e8e8e8" /></Ico>
          </TrayItem>
          <TrayItem $ml={5}>ENG</TrayItem>
          <TrayItem $ml={6}>9:05 pm</TrayItem>
          <TrayItem $ml={10}>
            <Ico s={14} v="0 0 14 14"><path d="M0 0h14v11H9l-2 2-2-2H0z" fill="#f0f0f0" /><path d="M3 3h8M3 5.500h8M3 8h5" stroke="#1a2a42" /></Ico>
          </TrayItem>
        </Tray>
      </Taskbar>

      <BackDialog>
        <BackTitle>
          <BackLabel><TiledLogo s={13} />New Tileset - Tiled</BackLabel>
          <IX s={9} c="#aaa" />
        </BackTitle>
      </BackDialog>

      <Dialog>
        <DialogTitle>
          <DialogLabel><TiledLogo />Tileset Image</DialogLabel>
          <IX s={10} c="#333" />
        </DialogTitle>
        <AddressRow>
          <NavArrow $w={12}><Ico s={10} v="0 0 10 10"><path d="M9 5H1M4 2L1 5l3 3" fill="none" stroke="#ccc" /></Ico></NavArrow>
          <NavArrow $w={12} $gap={13}><Ico s={10} v="0 0 10 10"><path d="M1 5h8M6 2l3 3-3 3" fill="none" stroke="#ccc" /></Ico></NavArrow>
          <NavArrow $w={8} $gap={8}><Chev c="#ddd" /></NavArrow>
          <NavArrow $w={12} $gap={9}><Ico s={10} v="0 0 10 10"><path d="M5 10V1M2 4l3-3 3 3" fill="none" stroke="#555" /></Ico></NavArrow>
          <PathBox>
            <Ico w={9} h={12} v="0 0 9 12"><path d="M0 0h9v12H0z" fill="#f0ce6a" /><path d="M0 0h4v12H0z" fill="#f6dc90" /></Ico>
            <PathText $ml={8} $c="#777">«</PathText>
            <PathText $ml={6}>resources</PathText>
            <PathText $ml={7} $c="#999">›</PathText>
            <PathText $ml={7}>images</PathText>
            <PathText $ml={7} $c="#999">›</PathText>
            <PathText $ml={7}>spritesheets</PathText>
            <PathEnd><Chev c="#555" s={9} /></PathEnd>
          </PathBox>
          <RefreshBox>
            <Ico s={11} v="0 0 11 11"><path d="M7 1.500A4.300 4.300 0 1 1 3 2" fill="none" stroke="#666" /><path d="M3 0v3h3" fill="none" stroke="#666" /></Ico>
          </RefreshBox>
          <SearchBox>
            <Ico s={11} v="0 0 11 11"><circle cx="6.500" cy="4.500" r="3.500" fill="none" stroke="#999" /><path d="M4 7l-3 3" stroke="#999" /></Ico>
            Search spritesheets
          </SearchBox>
        </AddressRow>
        <CommandBar>
          <CommandItem>Organize<Caret $s={2} $c="#444" /></CommandItem>
          <CommandItem $ml={25}>New folder</CommandItem>
          <ViewButton>
            <ViewMain>
              <Ico s={13} v="0 0 13 13"><path d="M5 2.500h8M5 6.500h8M5 10.500h8" stroke="#777" /><circle cx="2" cy="2.500" r="1.200" fill="none" stroke="#888" /><circle cx="2" cy="6.500" r="1.200" fill="none" stroke="#888" /><circle cx="2" cy="10.500" r="1.200" fill="none" stroke="#888" /></Ico>
            </ViewMain>
            <ViewDrop><Caret $s={2} $c="#222" /></ViewDrop>
          </ViewButton>
          <CommandIcon $ml={14}>
            <Ico w={13} h={10} v="0 0 13 10"><rect x=".5" y=".5" width="12" height="9" fill="#fff" stroke="#6f9cbc" /><rect x="7" y="1" width="5" height="8" fill="#4c90c0" /></Ico>
          </CommandIcon>
          <CommandIcon $ml={17}>
            <Ico s={14} v="0 0 14 14"><circle cx="7" cy="7" r="7" fill="#0f62ad" /><path d="M4.800 5.200C5 3.500 9.200 3.500 9.200 5.500c0 1.500-2.200 1.500-2.200 3.300M7 10v1.200" fill="none" stroke="#fff" strokeWidth="1.400" /></Ico>
          </CommandIcon>
        </CommandBar>
        <DialogBody>
          <NavPane>
            <NavRow $pl={22} $g={2}>
              <Ico s={13} v="0 0 13 13"><rect x="3" y="1" width="9" height="7" fill="#3f9ad8" /><path d="M1 11l4-3h6l-6 4z" fill="#cfd8df" /></Ico>
              This PC
            </NavRow>
            {navItems.map(([label, icon], i) => (
              <NavRow key={label} $sel={i === navItems.length - 1}>
                {icon}{label}
              </NavRow>
            ))}
          </NavPane>
          <NavScroll>
            <Chev d="up" c="#555" />
            <NavThumb />
            <Chev d="down" c="#555" />
          </NavScroll>
          <FileList>
            <FileHead>
              <SortMark />
              <span>Name</span><span>Date modified</span><span>Type</span>
            </FileHead>
            {files.map(f => (
              <FileRow key={f} $sel={f === 'tiles.png'}>
                <FileName><FileIcon />{f}</FileName>
                <FileMeta>28/10/2020 10:14 am</FileMeta>
                <FileMeta>PNG image</FileMeta>
              </FileRow>
            ))}
            <ListSpacer />
            <HScroll $bg="#f0f0f0" $h={14}>
              <Chev d="left" c="#555" />
              <Thumb $w={326} $h={14} $ml={6} $c="#cdcdcd" />
              <Chev d="right" c="#555" />
            </HScroll>
          </FileList>
        </DialogBody>
        <Footer>
          <FooterRow>
            <FileLabel>File name:</FileLabel>
            <FileInput>tiles.png<Chev c="#777" /></FileInput>
            <FileType>Image files (*.bmp *.gif *.jpeg *<Chev c="#777" /></FileType>
          </FooterRow>
          <ButtonRow>
            <OpenButton>
              <OpenLabel>Open</OpenLabel>
              <OpenDrop><Caret $s={3} $c="#222" /></OpenDrop>
            </OpenButton>
            <CancelButton>Cancel</CancelButton>
          </ButtonRow>
          <Grip>
            <Ico s={9} v="0 0 9 9"><path d="M7 1h1v1H7zM7 4h1v1H7zM4 4h1v1H4zM7 7h1v1H7zM4 7h1v1H4zM1 7h1v1H1z" fill="#999" /></Ico>
          </Grip>
        </Footer>
      </Dialog>

      <Highlight />
      <Pointer>
        <Ico w={11} h={15} v="0 0 11 15"><path d="M1 1v11l2.700-2.500L5.500 14l2-1-1.800-4.300H9.500z" fill="#fff" stroke="#111" /></Ico>
      </Pointer>

      <Watermark>
        <WmSmall><WmBadge /><WmLabel>RECORDED WITH</WmLabel></WmSmall>
        <WmBig>
          SCREENCAST
          <Ico s={21} v="0 0 21 21"><circle cx="10.500" cy="10.500" r="9.500" fill="none" stroke="#5b7f92" strokeWidth="2" /><circle cx="10.500" cy="10.500" r="5" fill="#7ab4dc" /><path d="M12 17h6v-3z" fill="#e6d66a" /></Ico>
          MATIC
        </WmBig>
      </Watermark>
    </Page>
  )
}
